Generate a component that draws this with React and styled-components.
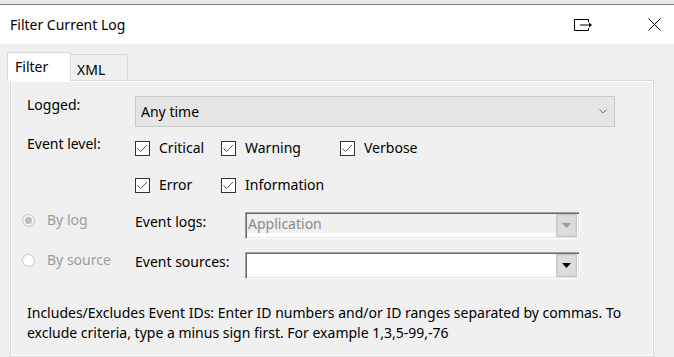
import React from "react";
import styled, { createGlobalStyle } from "styled-components";

const GlobalStyle = createGlobalStyle`
  html, body { margin: 0; padding: 0; }
  body {
    background: #f0f0f0;
    font-family: "Noto Sans", "Open Sans", sans-serif;
    font-size: 14px;
    color: #000;
    overflow: hidden;
  }
  * { box-sizing: border-box; }
`;

const Window = styled.div`
  width: 674px;
  height: 357px;
  display: flex;
  flex-direction: column;
  overflow: hidden;
`;

const TopStrip = styled.div`
  height: 5px;
  background: #e8e8e8;
  border-bottom: 1px solid #7c7c7c;
  flex: none;
`;

const TitleBar = styled.div`
  height: 39px;
  flex: none;
  background: #fff;
  display: flex;
  align-items: center;
  padding-left: 10px;
`;

const Title = styled.div`
  flex: 1;
  font-size: 14px;
  line-height: 20px;
  color: #000;
`;

const ButtonGroup = styled.div`
  display: flex;
  gap: 31px;
  align-items: center;
`;

const TitleButton = styled.div`
  width: 40px;
  height: 39px;
  display: flex;
  align-items: center;
  justify-content: center;
`;

const Body = styled.div`
  flex: 1;
  display: flex;
  flex-direction: column;
  padding-top: 8px;
`;

const TabBar = styled.div`
  display: flex;
  align-items: flex-end;
  height: 29px;
  margin-left: 7px;
  margin-bottom: -1px;
  position: relative;
  z-index: 1;
`;

const Tab = styled.div`
  width: ${(p) => p.$w}px;
  height: ${(p) => (p.$active ? 29 : 26)}px;
  margin-bottom: ${(p) => (p.$active ? 0 : 1)}px;
  background: ${(p) => (p.$active ? "#fff" : "#f0f0f0")};
  border: 1px solid #d9d9d9;
  border-left: ${(p) => (p.$active ? "1px solid #d9d9d9" : "none")};
  border-bottom: none;
  display: flex;
  align-items: center;
  padding-left: ${(p) => (p.$active ? 7 : 6)}px;
  padding-top: ${(p) => (p.$active ? 0 : 4)}px;
  font-size: 14px;
  line-height: 18px;
`;

const Panel = styled.div`
  flex: 1;
  margin-left: 10px;
  width: 644px;
  border: 1px solid #d9d9d9;
  box-shadow: inset 0 0 0 1px #fff;
  padding: 15px 16px 0 16px;
  display: flex;
  flex-direction: column;
`;

const FieldRow = styled.div`
  display: grid;
  grid-template-columns: ${(p) => p.$cols};
  align-items: start;
  margin-top: ${(p) => p.$mt}px;
`;

const Label = styled.div`
  line-height: 18px;
  white-space: nowrap;
  margin-top: ${(p) => p.$mt || 0}px;
  color: #000;
`;

const Select = styled.div`
  width: 480px;
  height: 31px;
  background: #e5e5e5;
  border: 1px solid #c9c9c9;
  display: flex;
  align-items: center;
  justify-content: space-between;
  padding: 0 7px 0 5px;
  line-height: 18px;
`;

const CheckGrid = styled.div`
  display: grid;
  grid-template-columns: 86px 119px auto;
  row-gap: 15px;
`;

const CheckItem = styled.div`
  height: 22px;
  display: flex;
  align-items: center;
  gap: 9px;
  line-height: 18px;
  white-space: nowrap;
`;

const Box = styled.div`
  width: 15px;
  height: 15px;
  border: 1px solid #333;
  background: #fff;
  display: flex;
  align-items: center;
  justify-content: center;
  flex: none;
`;

const RadioItem = styled.div`
  height: 16px;
  margin-left: -5px;
  display: flex;
  align-items: center;
  gap: 12px;
  color: #9b9b9b;
  line-height: 18px;
  white-space: nowrap;
`;

const RadioCircle = styled.div`
  width: 13px;
  height: 13px;
  border-radius: 50%;
  border: 1px solid #c4c4c4;
  background: ${(p) => (p.$checked ? "#f3f3f3" : "#fff")};
  display: flex;
  align-items: center;
  justify-content: center;
  flex: none;
  &::after {
    content: "";
    display: ${(p) => (p.$checked ? "block" : "none")};
    width: 7px;
    height: 7px;
    border-radius: 50%;
    background: #bdbdbd;
  }
`;

const Combo = styled.div`
  width: 335px;
  height: 27px;
  border: 1px solid;
  border-color: #a0a0a0 #fff #fff #a0a0a0;
  box-shadow: inset 1px 1px 0 #6b6b6b, inset -1px -1px 0 #e3e3e3;
  background: #fff;
  padding: 1px 2px 1px 1px;
  display: flex;
  align-items: stretch;
`;

const ComboField = styled.div`
  flex: 1;
  background: ${(p) => (p.$disabled ? "#f0f0f0" : "#fff")};
  color: #8a8a8a;
  margin-bottom: ${(p) => (p.$disabled ? 4 : 0)}px;
  padding-left: 1px;
  display: flex;
  align-items: center;
  line-height: 18px;
`;

const ComboButton = styled.div`
  width: 21px;
  background: #dcdcdc;
  border: 1px solid #c6c6c6;
  box-shadow: inset 0 0 0 1px #d4d4d4;
  display: flex;
  align-items: center;
  justify-content: center;
`;

const Description = styled.div`
  margin-top: 24px;
  line-height: 20px;
  width: 610px;
  color: #000;
`;

function DockIcon() {
  return (
    <svg width="19" height="12" viewBox="0 0 19 12">
      <path d="M14.5 3V0.5H0.5V11.5H14.5V9" fill="none" stroke="#000" strokeWidth="1" />
      <path d="M6 6H16.5" stroke="#000" strokeWidth="1" />
      <path d="M15 3.5L18 6L15 8.5Z" fill="#000" />
    </svg>
  );
}

function CloseIcon() {
  return (
    <svg width="13" height="13" viewBox="0 0 13 13">
      <path d="M0.5 0.5L12.5 12.5M12.5 0.5L0.5 12.5" stroke="#000" strokeWidth="1" />
    </svg>
  );
}

function Chevron() {
  return (
    <svg width="8" height="5" viewBox="0 0 8 5">
      <polyline points="0.5,0.5 4,4 7.5,0.5" fill="none" stroke="#707070" strokeWidth="1" />
    </svg>
  );
}

function Triangle({ color }) {
  return (
    <svg width="9" height="5" viewBox="0 0 9 5">
      <path d="M0 0H9L4.5 5Z" fill={color} />
    </svg>
  );
}

function Checkbox({ label }) {
  return (
    <CheckItem>
      <Box>
        <svg width="13" height="13" viewBox="0 0 13 13">
          <polyline points="1.5,6.5 4.5,9.5 11,3" fill="none" stroke="#555" strokeWidth="1" />
        </svg>
      </Box>
      {label}
    </CheckItem>
  );
}

function Radio({ label, checked }) {
  return (
    <RadioItem>
      <RadioCircle $checked={checked} />
      {label}
    </RadioItem>
  );
}

export default function App() {
  return (
    <>
      <GlobalStyle />
      <Window>
        <TopStrip />
        <TitleBar>
          <Title>Filter Current Log</Title>
          <ButtonGroup>
            <TitleButton>
              <DockIcon />
            </TitleButton>
            <TitleButton>
              <CloseIcon />
            </TitleButton>
          </ButtonGroup>
        </TitleBar>
        <Body>
          <TabBar>
            <Tab $active $w={64}>Filter</Tab>
            <Tab $w={57}>XML</Tab>
          </TabBar>
          <Panel>
            <FieldRow $cols="108px 1fr" $mt={0}>
              <Label>Logged:</Label>
              <Select>
                <span>Any time</span>
                <Chevron />
              </Select>
            </FieldRow>
            <FieldRow $cols="108px 1fr" $mt={10}>
              <Label $mt={-2}>Event level:</Label>
              <CheckGrid>
                <Checkbox label="Critical" />
                <Checkbox label="Warning" />
                <Checkbox label="Verbose" />
                <Checkbox label="Error" />
                <Checkbox label="Information" />
              </CheckGrid>
            </FieldRow>
            <FieldRow $cols="108px 110px 335px" $mt={16}>
              <Radio label="By log" checked />
              <Label $mt={1}>Event logs:</Label>
              <Combo>
                <ComboField $disabled>Application</ComboField>
                <ComboButton>
                  <Triangle color="#9a9a9a" />
                </ComboButton>
              </Combo>
            </FieldRow>
            <FieldRow $cols="108px 110px 335px" $mt={13}>
              <Radio label="By source" />
              <Label $mt={1}>Event sources:</Label>
              <Combo>
                <ComboField />
                <ComboButton>
                  <Triangle color="#000" />
                </ComboButton>
              </Combo>
            </FieldRow>
            <Description>
              Includes/Excludes Event IDs: Enter ID numbers and/or ID ranges separated by commas. To
              exclude criteria, type a minus sign first. For example 1,3,5-99,-76
            </Description>
          </Panel>
        </Body>
      </Window>
    </>
  );
}
